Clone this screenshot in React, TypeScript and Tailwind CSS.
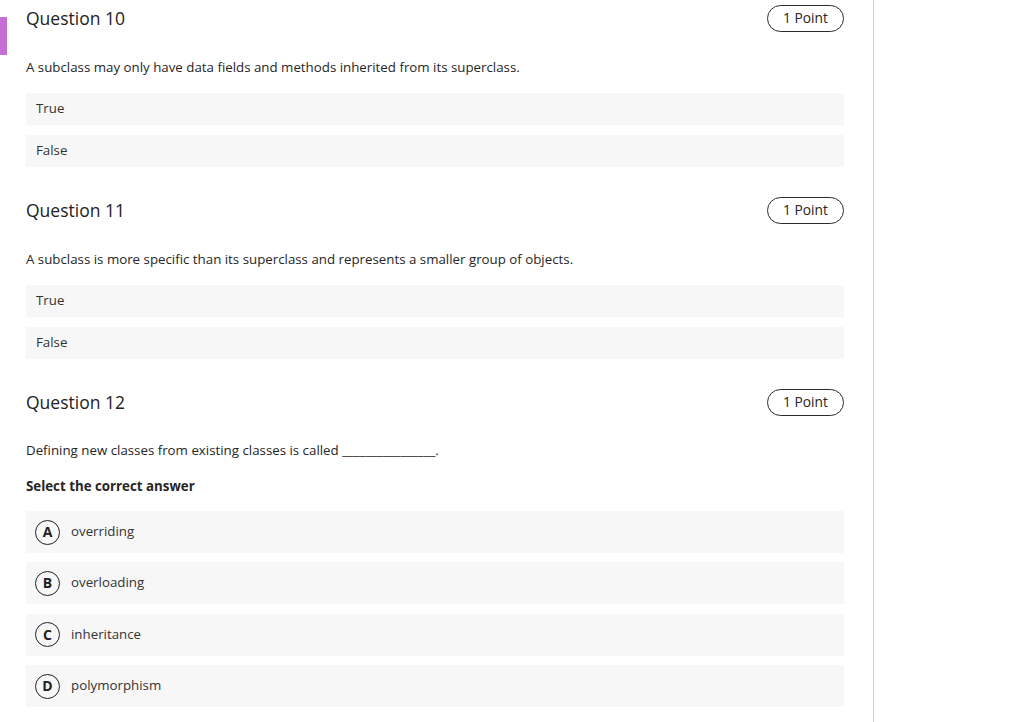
import React from "react";

const Badge = () => (
  <div className="flex h-[27px] w-[77px] items-center justify-center rounded-full border border-[#2b2b2b] text-[13.8px] text-[#262626]">
    1 Point
  </div>
);

const Header = ({ title }: { title: string }) => (
  <div className="flex h-[27px] items-center justify-between">
    <div className="text-[17.5px] leading-none text-[#222]">{title}</div>
    <Badge />
  </div>
);

const TFOption = ({ label }: { label: string }) => (
  <div className="flex h-8 items-center bg-[#f7f7f7] pl-[10px] text-[13.3px] text-[#333]">{label}</div>
);

const LetterOption = ({ letter, label }: { letter: string; label: string }) => (
  <div className="flex h-[42px] items-center gap-[11px] bg-[#f7f7f7] pl-[9px] text-[13.3px] text-[#333]">
    <div className="flex h-[25px] w-[25px] shrink-0 items-center justify-center rounded-full border-[1.5px] border-[#222] text-[14px] font-bold leading-none text-[#222]">
      {letter}
    </div>
    <span>{label}</span>
  </div>
);

const TFQuestion = ({ title, text, first }: { title: string; text: string; first?: boolean }) => (
  <section className={`relative ${first ? "" : "mt-[30px]"}`}>
    {first && <div className="absolute left-[-26px] top-[12px] h-[38px] w-[7px] bg-[#c56dd5]" />}
    <Header title={title} />
    <p className="mt-[26px] text-[13.3px] leading-[18px] text-[#262626]">{text}</p>
    <div className="mt-[17px] flex flex-col gap-[10px]">
      <TFOption label="True" />
      <TFOption label="False" />
    </div>
  </section>
);

export default function App() {
  return (
    <div className="min-h-[722px] w-full bg-white" style={{ fontFamily: "'Open Sans', 'Noto Sans', sans-serif" }}>
      <div className="min-h-[722px] w-[874px] border-r border-[#d2d2d2] pl-[26px] pr-[29px] pt-[5px]">
        <TFQuestion
          first
          title="Question 10"
          text="A subclass may only have data fields and methods inherited from its superclass."
        />
        <TFQuestion
          title="Question 11"
          text="A subclass is more specific than its superclass and represents a smaller group of objects."
        />
        <section className="mt-[30px]">
          <Header title="Question 12" />
          <p className="mt-[25px] text-[13.3px] leading-[18px] text-[#262626]">
            Defining new classes from existing classes is called ________________.
          </p>
          <p className="mt-[18px] text-[13.3px] font-bold leading-[18px] text-[#262626]">Select the correct answer</p>
          <div className="mt-[16px] flex flex-col gap-[9.4px]">
            <LetterOption letter="A" label="overriding" />
            <LetterOption letter="B" label="overloading" />
            <LetterOption letter="C" label="inheritance" />
            <LetterOption letter="D" label="polymorphism" />
          </div>
        </section>
      </div>
    </div>
  );
}
